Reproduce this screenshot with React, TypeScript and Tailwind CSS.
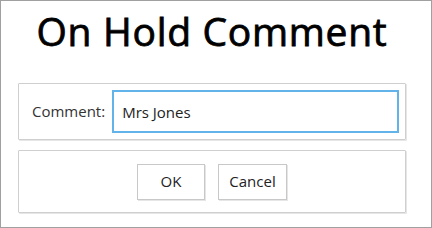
import { useState } from 'react'

const font = { fontFamily: '"Open Sans", "Noto Sans", "Liberation Sans", sans-serif' }

export default function App() {
  const [comment, setComment] = useState('Mrs Jones')

  return (
    <div
      className="flex h-[228px] w-[432px] flex-col border border-[#a0a0a0] bg-white text-[#1a1a1a]"
      style={font}
    >
      <h1 className="mt-[4px] pr-[8px] text-center text-[39px] leading-[52px] font-normal tracking-[0.7px] text-black [-webkit-text-stroke:0.8px_#000]">
        On Hold Comment
      </h1>

      <div className="ml-[17px] mr-[25px] mt-[26px] flex h-[57px] items-center rounded-[1px] border border-[#cfcfcf] pl-[13px] pr-[6px] shadow-[1px_1px_0_#e6e6e6]">
        <label className="mr-[7px] text-[15px] text-[#333]">Comment:</label>
        <input
          value={comment}
          onChange={(e) => setComment(e.target.value)}
          className="h-[43px] flex-1 border-2 border-[#62b3ea] px-[8px] text-[15px] text-[#222] outline-none"
        />
      </div>

      <div className="ml-[17px] mr-[25px] mt-[10px] flex h-[63px] items-center justify-center gap-[13px] rounded-[1px] border border-[#cfcfcf] shadow-[1px_1px_0_#e6e6e6]">
        <button className="h-[36px] w-[68px] border border-[#c8c8c8] bg-white text-[15px] text-[#222] shadow-[1px_1px_0_#e6e6e6]">
          OK
        </button>
        <button className="h-[36px] w-[69px] border border-[#c8c8c8] bg-white text-[15px] text-[#222] shadow-[1px_1px_0_#e6e6e6]">
          Cancel
        </button>
      </div>
    </div>
  )
}
